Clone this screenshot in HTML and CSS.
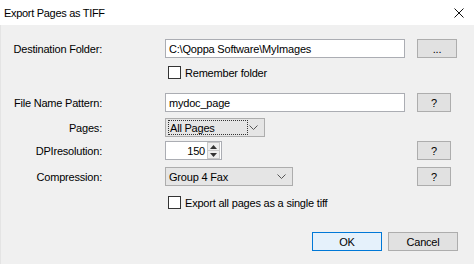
FILE: index.html
```html
<!DOCTYPE html>
<html>
<head>
    <title>Export Pages as TIFF</title>
    <meta charset="UTF-8">
    <link rel="stylesheet" href="styles.css">
</head>
<body class="page">
    <div class="window">
        <div class="titlebar">
            <span class="title">Export Pages as TIFF</span>
            <svg class="close" width="10" height="10" viewBox="0 0 10 10"><path d="M0.5 0.5 L9.5 9.5 M9.5 0.5 L0.5 9.5" stroke="#111" stroke-width="1"/></svg>
        </div>

        <div class="content">
            <div class="row row-dest">
                <label class="label">Destination Folder:</label>
                <div class="textbox">C:\Qoppa Software\MyImages</div>
                <button class="btn btn-browse">...</button>
            </div>

            <div class="row row-check1">
                <span class="checkbox"></span>
                <span class="check-text">Remember folder</span>
            </div>

            <div class="row row-name">
                <label class="label">File Name Pattern:</label>
                <div class="textbox">mydoc_page</div>
                <button class="btn btn-help">?</button>
            </div>

            <div class="row row-pages">
                <label class="label">Pages:</label>
                <div class="combo combo-pages">
                    <span class="focus-box">All Pages</span>
                    <svg class="chevron" width="9" height="5" viewBox="0 0 9 5"><path d="M0.5 0.5 L4.5 4.5 L8.5 0.5" fill="none" stroke="#555" stroke-width="1"/></svg>
                </div>
            </div>

            <div class="row row-dpi">
                <label class="label">DPIresolution:</label>
                <div class="spinner">
                    <span class="spin-value">150</span>
                    <span class="spin-arrows">
                        <span class="spin-up"><svg width="7" height="4" viewBox="0 0 7 4"><path d="M0 4 L3.5 0 L7 4 Z" fill="#333"/></svg></span>
                        <span class="spin-down"><svg width="7" height="4" viewBox="0 0 7 4"><path d="M0 0 L3.5 4 L7 0 Z" fill="#333"/></svg></span>
                    </span>
                </div>
                <button class="btn btn-help">?</button>
            </div>

            <div class="row row-comp">
                <label class="label">Compression:</label>
                <div class="combo combo-comp">
                    <span class="combo-text">Group 4 Fax</span>
                    <svg class="chevron" width="9" height="5" viewBox="0 0 9 5"><path d="M0.5 0.5 L4.5 4.5 L8.5 0.5" fill="none" stroke="#555" stroke-width="1"/></svg>
                </div>
                <button class="btn btn-help">?</button>
            </div>

            <div class="row row-check2">
                <span class="checkbox"></span>
                <span class="check-text">Export all pages as a single tiff</span>
            </div>

            <div class="row row-actions">
                <button class="btn btn-action btn-ok">OK</button>
                <button class="btn btn-action">Cancel</button>
            </div>
        </div>
    </div>
</body>
</html>
```

FILE: styles.css
```css
.page{
margin: 0;
background: #ffffff;
font-family: "Liberation Sans", Arial, sans-serif;
font-size: 11px;
letter-spacing: -0.2px;
color: #000000;
}

.window{
width: 474px;
height: 267px;
display: flex;
flex-direction: column;
}

.titlebar{
height: 25px;
background: #ffffff;
display: flex;
align-items: center;
justify-content: space-between;
padding: 0 10px 0 4px;
letter-spacing: -0.3px;
}

.content{
height: 239px;
background: #f0f0f0;
padding-top: 14px;
box-sizing: border-box;
border-left: 1px solid #e4e4e4;
}

.row{
display: flex;
align-items: center;
height: 19px;
}

.label{
width: 88px;
flex-shrink: 0;
margin-left: 13px;
margin-right: 63px;
display: flex;
justify-content: flex-end;
white-space: nowrap;
}

.textbox{
width: 240px;
height: 19px;
flex-shrink: 0;
box-sizing: border-box;
background: #ffffff;
border: 1px solid #abadb3;
padding: 0 3px;
display: flex;
align-items: center;
}

.btn{
font-family: inherit;
font-size: 11px;
letter-spacing: inherit;
height: 19px;
box-sizing: border-box;
background: #e1e1e1;
border: 1px solid #adadad;
padding: 0;
color: #000000;
flex-shrink: 0;
}

.btn-browse{
width: 40px;
margin-left: 12px;
}

.btn-help{
width: 34px;
margin-left: 12px;
}

.row-check1{
margin-top: 8px;
height: 13px;
padding-left: 167px;
}

.row-check2{
margin-top: 10px;
height: 13px;
padding-left: 167px;
}

.checkbox{
width: 13px;
height: 13px;
box-sizing: border-box;
border: 1px solid #333333;
background: #ffffff;
margin-right: 4px;
}

.row-name{
margin-top: 14px;
}

.row-pages{
margin-top: 6px;
}

.row-dpi{
margin-top: 4px;
}

.row-comp{
margin-top: 7px;
}

.combo{
height: 19px;
flex-shrink: 0;
box-sizing: border-box;
background: #e5e5e5;
border: 1px solid #adadad;
display: flex;
align-items: center;
justify-content: space-between;
padding: 0 6px 0 2px;
}

.combo-pages{
width: 100px;
}

.combo-comp{
width: 128px;
padding-left: 3px;
}

.focus-box{
width: 80px;
height: 15px;
box-sizing: border-box;
border: 1px dotted #333333;
display: flex;
align-items: center;
padding-left: 1px;
}

.spinner{
width: 57px;
height: 19px;
flex-shrink: 0;
box-sizing: border-box;
background: #ffffff;
border: 1px solid #abadb3;
display: flex;
align-items: center;
justify-content: flex-end;
}

.spin-value{
margin-right: 2px;
}

.spin-arrows{
display: flex;
flex-direction: column;
width: 13px;
height: 17px;
margin-right: 1px;
}

.spin-up,
.spin-down{
flex: 1;
display: flex;
align-items: center;
justify-content: center;
background: #eeeeee;
border: 1px solid #c8c8c8;
}

.spin-up{
border-bottom: none;
}

.row-dpi .btn-help{
margin-left: 195px;
}

.row-comp .btn-help{
margin-left: 124px;
}

.row-actions{
margin-top: 23px;
justify-content: flex-end;
padding-right: 16px;
}

.btn-action{
width: 70px;
margin-left: 6px;
}

.btn-ok{
background: #e5f1fb;
border: 1px solid #0078d7;
}
```
